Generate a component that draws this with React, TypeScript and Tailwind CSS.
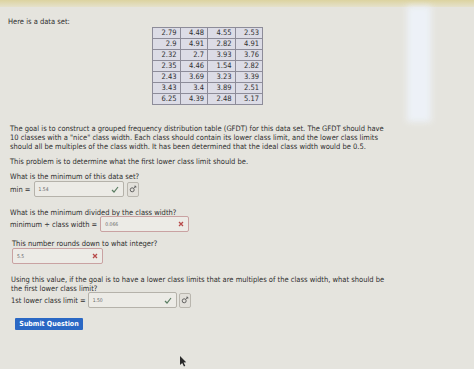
import React from 'react';

const data = [
  ['2.79', '4.48', '4.55', '2.53'],
  ['2.9', '4.91', '2.82', '4.91'],
  ['2.32', '2.7', '3.93', '3.76'],
  ['2.35', '4.46', '1.54', '2.82'],
  ['2.43', '3.69', '3.23', '3.39'],
  ['3.43', '3.4', '3.89', '2.51'],
  ['6.25', '4.39', '2.48', '5.17'],
];

const Check = () => (
  <svg width="8" height="7" viewBox="0 0 8 7" className="shrink-0">
    <path d="M1 4 L3 6 L7 1" fill="none" stroke="#5a7d62" strokeWidth="1.2" />
  </svg>
);

const Cross = () => (
  <svg width="6" height="6" viewBox="0 0 6 6" className="shrink-0">
    <path d="M1 1 L5 5 M5 1 L1 5" stroke="#b84a4a" strokeWidth="1.3" />
  </svg>
);

const PreviewBtn = () => (
  <div className="w-[12px] h-[15px] border border-[#b9b6ae] rounded-[2px] bg-[#e2e0da] flex items-center justify-center">
    <svg width="8" height="8" viewBox="0 0 8 8">
      <circle cx="3.2" cy="4.8" r="2" fill="none" stroke="#555" strokeWidth="0.9" />
      <path d="M4.6 3.4 L6.8 1.2 M5.2 1.2 H6.8 V2.8" fill="none" stroke="#555" strokeWidth="0.8" />
    </svg>
  </div>
);

const AnswerBox = ({
  value,
  width,
  status,
}: {
  value: string;
  width: string;
  status: 'ok' | 'bad';
}) => (
  <div
    className={`${width} h-[16px] rounded-[2px] border bg-[#ecebe6] flex items-center justify-between pl-[4px] pr-[4px] ${
      status === 'bad' ? 'border-[#c9a2a2]' : 'border-[#b5b2aa]'
    }`}
  >
    <span className="text-[5px] text-[#666]">{value}</span>
    {status === 'ok' ? <Check /> : <Cross />}
  </div>
);

export default function App() {
  return (
    <div
      className="w-[474px] h-[369px] overflow-hidden bg-[#e5e4de] text-[#2f2f2f] relative"
      style={{ fontFamily: '"DejaVu Sans Condensed", "DejaVu Sans", sans-serif' }}
    >
      <div className="h-[7px] bg-gradient-to-b from-[#dcd3a0] to-[#e5e1cb]" />
      {/* screen glare */}
      <div className="absolute left-[407px] top-[6px] w-[24px] h-[116px] bg-[#eef3fa] blur-[3px] opacity-90" />

      <div className="relative pl-[8px] pr-[6px] text-[7.5px] leading-[9px]">
        <p className="mt-[10px]">Here is a data set:</p>

        <table className="ml-[144px] mt-[1px] border-collapse border border-[#7d7c88] text-[7.5px] leading-[10px]">
          <tbody>
            {data.map((row, i) => (
              <tr key={i}>
                {row.map((c, j) => (
                  <td
                    key={j}
                    className="w-[27.5px] h-[10.7px] p-0 border border-[#8d8c99] bg-[#dcdce6] text-right pr-[3px]"
                  >
                    {c}
                  </td>
                ))}
              </tr>
            ))}
          </tbody>
        </table>

        <p className="mt-[19px] pl-[2px]">
          The goal is to construct a grouped frequency distribution table (GFDT) for this data set. The GFDT should have
          <br />
          10 classes with a "nice" class width. Each class should contain its lower class limit, and the lower class limits
          <br />
          should all be multiples of the class width. It has been determined that the ideal class width would be 0.5.
        </p>

        <p className="mt-[6px] pl-[2px]">This problem is to determine what the first lower class limit should be.</p>

        <p className="mt-[6px] pl-[2px]">What is the minimum of this data set?</p>
        <div className="flex items-center gap-[3px] pl-[2px]">
          <span>min =</span>
          <AnswerBox value="1.54" width="w-[90px]" status="ok" />
          <PreviewBtn />
        </div>

        <p className="mt-[11px] pl-[2px]">What is the minimum divided by the class width?</p>
        <div className="flex items-center gap-[3px] pl-[2px] -mt-[1px]">
          <span>minimum ÷ class width =</span>
          <AnswerBox value="0.066" width="w-[89px]" status="bad" />
        </div>

        <p className="mt-[7px] pl-[4px]">This number rounds down to what integer?</p>
        <div className="pl-[4px]">
          <AnswerBox value="5.5" width="w-[91px]" status="bad" />
        </div>

        <p className="mt-[11px] pl-[3px]">
          Using this value, if the goal is to have a lower class limits that are multiples of the class width, what should be
          <br />
          the first lower class limit?
        </p>
        <div className="flex items-center gap-[2px] pl-[3px] -mt-[1px]">
          <span>1st lower class limit =</span>
          <AnswerBox value="1.50" width="w-[89px]" status="ok" />
          <PreviewBtn />
        </div>

        <button className="mt-[10px] ml-[7px] h-[12px] w-[68px] rounded-[1px] bg-[#2b68c4] text-white text-[7px] font-bold leading-[12px]">
          Submit Question
        </button>
      </div>

      {/* mouse cursor */}
      <svg className="absolute left-[179px] top-[355px]" width="8" height="12" viewBox="0 0 8 12">
        <path d="M1 1 L1 10 L3.2 8 L5 11.5 L6.3 10.8 L4.6 7.4 L7.2 7.2 Z" fill="#2a2a2a" />
      </svg>
    </div>
  );
}
